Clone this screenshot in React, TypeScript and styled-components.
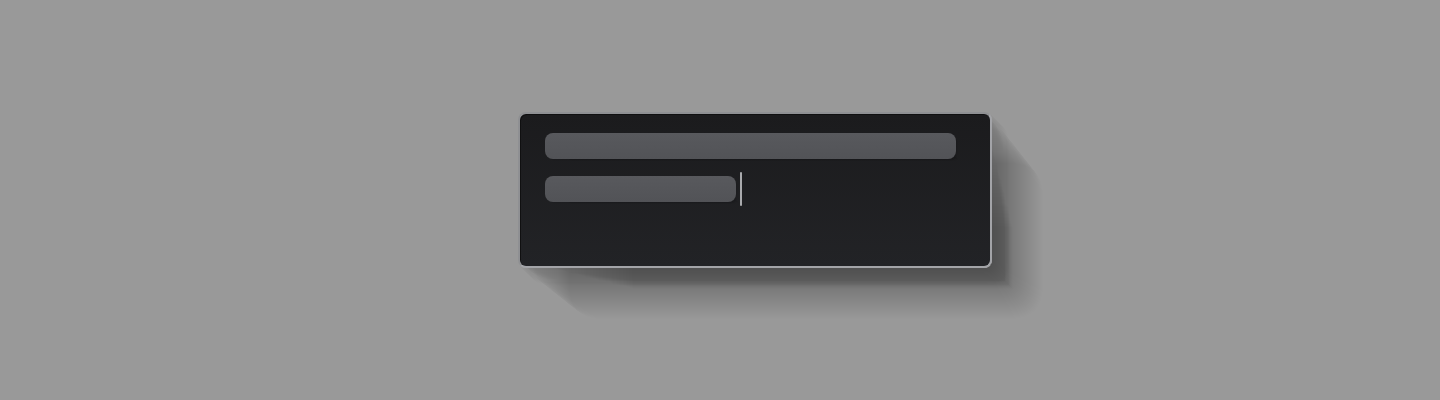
import styled, { createGlobalStyle } from 'styled-components';

const GlobalStyle = createGlobalStyle`
    html, body {
        margin: 0;
        padding: 0;
        background: #999999;
        font-family: "Liberation Sans", Arial, sans-serif;
    }
`;

// soft diagonal shadow that fades as it gets further away
const longShadow = (steps: number, alpha: number, blur: number) =>
    Array.from({ length: steps }, (_, i) => {
        const a = (alpha * Math.sqrt(1 - i / steps)).toFixed(4);
        return `${i + 1}px ${i + 1}px ${blur + i / 2}px rgba(0, 0, 0, ${a})`;
    }).join(', ');

const Page = styled.div`
    width: 1440px;
    height: 400px;
    overflow: hidden;
    box-sizing: border-box;
    padding: 112px 0 0 518px;
`;

const Card = styled.div`
    width: 474px;
    height: 156px;
    box-sizing: border-box;
    border-radius: 8px;
    border: 2px solid #a3a4a8;
    border-top-color: #8f9093;
    border-left-color: #8f9093;
    background: linear-gradient(180deg, #1b1b1d 0%, #222326 100%);
    box-shadow: inset 1px 1px 0 #101011, ${longShadow(70, 0.011, 6)};
    padding: 19px 34px 0 25px;
    display: flex;
    flex-direction: column;
    gap: 17px;
`;

const Line = styled.div`
    display: flex;
    align-items: center;
    gap: 4px;
    height: 26px;
`;

const Bar = styled.div<{ $width: number }>`
    width: ${({ $width }) => $width}px;
    height: 26px;
    border-radius: 8px;
    background: linear-gradient(180deg, #58595d 0%, #525357 100%);
    box-shadow: ${longShadow(24, 0.006, 4)};
`;

const Caret = styled.div`
    width: 2px;
    height: 34px;
    background: #a9aaad;
    border-radius: 1px;
`;

export default function App() {
    return (
        <>
            <GlobalStyle />
            <Page>
                <Card>
                    <Line>
                        <Bar $width={411} />
                    </Line>
                    <Line>
                        <Bar $width={191} />
                        <Caret />
                    </Line>
                </Card>
            </Page>
        </>
    );
}
